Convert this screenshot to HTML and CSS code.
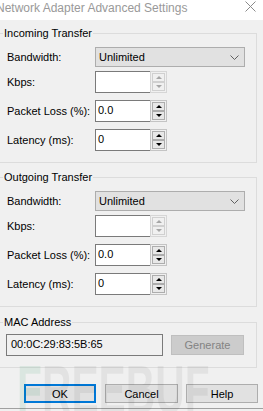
FILE: index.html
```html
<!DOCTYPE html>
<html>
<head>
    <title>Network Adapter Advanced Settings</title>
    <link rel="stylesheet" href="styles.css">
</head>

<body>
    <div class="titlebar">
        <span class="title">Network Adapter Advanced Settings</span>
        <svg class="close" width="11" height="11" viewBox="0 0 11 11">
            <path d="M0.5 0.5 L10.5 10.5 M10.5 0.5 L0.5 10.5" stroke="#8a8a8a" stroke-width="1" fill="none"/>
        </svg>
    </div>

    <div class="dialog">
        <fieldset class="group">
            <legend>Incoming Transfer</legend>
            <div class="row row-select">
                <label>Bandwidth:</label>
                <div class="select">
                    <span>Unlimited</span>
                    <svg width="9" height="5" viewBox="0 0 9 5"><path d="M0.5 0.5 L4.5 4.5 L8.5 0.5" stroke="#606060" fill="none"/></svg>
                </div>
            </div>
            <div class="row">
                <label>Kbps:</label>
                <div class="spin disabled">
                    <div class="field"></div>
                    <div class="arrows"><span class="btn"><i class="up"></i></span><span class="btn"><i class="down"></i></span></div>
                </div>
            </div>
            <div class="row">
                <label>Packet Loss (%):</label>
                <div class="spin">
                    <div class="field">0.0</div>
                    <div class="arrows"><span class="btn"><i class="up"></i></span><span class="btn"><i class="down"></i></span></div>
                </div>
            </div>
            <div class="row">
                <label>Latency (ms):</label>
                <div class="spin">
                    <div class="field">0</div>
                    <div class="arrows"><span class="btn"><i class="up"></i></span><span class="btn"><i class="down"></i></span></div>
                </div>
            </div>
        </fieldset>

        <fieldset class="group">
            <legend>Outgoing Transfer</legend>
            <div class="row row-select">
                <label>Bandwidth:</label>
                <div class="select">
                    <span>Unlimited</span>
                    <svg width="9" height="5" viewBox="0 0 9 5"><path d="M0.5 0.5 L4.5 4.5 L8.5 0.5" stroke="#606060" fill="none"/></svg>
                </div>
            </div>
            <div class="row">
                <label>Kbps:</label>
                <div class="spin disabled">
                    <div class="field"></div>
                    <div class="arrows"><span class="btn"><i class="up"></i></span><span class="btn"><i class="down"></i></span></div>
                </div>
            </div>
            <div class="row">
                <label>Packet Loss (%):</label>
                <div class="spin">
                    <div class="field">0.0</div>
                    <div class="arrows"><span class="btn"><i class="up"></i></span><span class="btn"><i class="down"></i></span></div>
                </div>
            </div>
            <div class="row">
                <label>Latency (ms):</label>
                <div class="spin">
                    <div class="field">0</div>
                    <div class="arrows"><span class="btn"><i class="up"></i></span><span class="btn"><i class="down"></i></span></div>
                </div>
            </div>
        </fieldset>

        <fieldset class="group group-mac">
            <legend>MAC Address</legend>
            <div class="mac-row">
                <div class="mac-field">00:0C:29:83:5B:65</div>
                <button class="generate" disabled>Generate</button>
            </div>
        </fieldset>

        <div class="buttons">
            <button class="push ok">OK</button>
            <button class="push cancel">Cancel</button>
            <button class="push help">Help</button>
        </div>
        <div class="bottom-edge"></div>
    </div>

    <div class="watermark"><span class="mark-f">F</span>REEBUF</div>
</body>

</html>
```

FILE: styles.css
```css
body {
    margin: 0;
    width: 263px;
    height: 411px;
    overflow: hidden;
    background: #f0f0f0;
    font-family: "Liberation Sans", Arial, sans-serif;
    font-size: 11px;
    color: #000;
    position: relative;
}

.titlebar {
    height: 20px;
    background: #fff;
    display: flex;
    align-items: center;
    justify-content: space-between;
}

.title {
    margin-left: -4px;
    margin-top: -4px;
    font-size: 12px;
    color: #999;
    white-space: nowrap;
}

.close {
    margin-right: 7px;
    margin-top: -8px;
}

.dialog {
    padding-top: 6px;
}

.group {
    margin: 0 0 7px -1px;
    width: 258px;
    box-sizing: border-box;
    border: 1px solid #dcdcdc;
    padding: 0 0 11px 0;
}

.group legend {
    margin-left: 3px;
    padding: 0 1px;
    line-height: 14px;
}

.row {
    display: flex;
    align-items: center;
    padding-left: 7px;
    height: 22px;
    margin-top: 7px;
}

.row label {
    width: 88px;
}

.row-select {
    height: 20px;
}

.row-select + .row {
    margin-top: 4px;
}

.select {
    width: 150px;
    height: 20px;
    box-sizing: border-box;
    border: 1px solid #adadad;
    background: #e1e1e1;
    display: flex;
    align-items: center;
    justify-content: space-between;
    padding: 0 5px 0 3px;
}

.spin {
    display: flex;
    height: 22px;
}

.field {
    width: 55px;
    height: 22px;
    box-sizing: border-box;
    border: 1px solid #7a7a7a;
    border-right: none;
    background: #fff;
    padding: 3px 0 0 2px;
}

.arrows {
    width: 17px;
    box-sizing: border-box;
    border: 1px solid #c4c4c4;
    padding: 1px;
    display: flex;
    flex-direction: column;
}

.btn {
    height: 9px;
    box-sizing: border-box;
    border: 1px solid #adadad;
    background: #e8e8e8;
    display: flex;
    align-items: center;
    justify-content: center;
}

.btn i {
    width: 0;
    height: 0;
    border-left: 3px solid transparent;
    border-right: 3px solid transparent;
}

.btn .up {
    border-bottom: 3px solid #000;
}

.btn .down {
    border-top: 3px solid #000;
}

.disabled .arrows {
    border-color: #d6d6d6;
}

.disabled .btn {
    border-color: #d0d0d0;
    background: #f0f0f0;
}

.disabled .btn .up {
    border-bottom-color: #a6a6a6;
}

.disabled .btn .down {
    border-top-color: #a6a6a6;
}

.group-mac {
    margin-top: 8px;
}

.mac-row {
    display: flex;
    align-items: flex-start;
    padding-left: 6px;
    margin-top: 5px;
}

.mac-field {
    width: 157px;
    height: 22px;
    box-sizing: border-box;
    border: 1px solid #7a7a7a;
    padding: 3px 0 0 4px;
}

.generate {
    margin: 1px 0 0 8px;
    width: 73px;
    height: 20px;
    border: 1px solid #bfbfbf;
    background: #cccccc;
    color: #838383;
    font-family: inherit;
    font-size: 11px;
    padding: 0;
}

.buttons {
    display: flex;
    padding-left: 24px;
    margin-top: 16px;
}

.push {
    height: 19px;
    border: 1px solid #adadad;
    background: #e1e1e1;
    font-family: inherit;
    font-size: 11px;
    color: #000;
    padding: 0;
}

.ok {
    width: 72px;
    border: 2px solid #0078d7;
}

.cancel {
    width: 73px;
    margin-left: 9px;
}

.help {
    width: 72px;
    margin-left: 8px;
}

.bottom-edge {
    margin-top: 5px;
    border-top: 1px solid #a0a0a0;
}

.watermark {
    position: absolute;
    left: 17px;
    top: 350px;
    font-size: 68px;
    font-weight: bold;
    color: rgba(0, 0, 0, 0.055);
    transform: scaleX(0.6);
    transform-origin: left top;
    pointer-events: none;
    white-space: nowrap;
}

.mark-f {
    color: rgba(0, 130, 70, 0.09);
}
```
